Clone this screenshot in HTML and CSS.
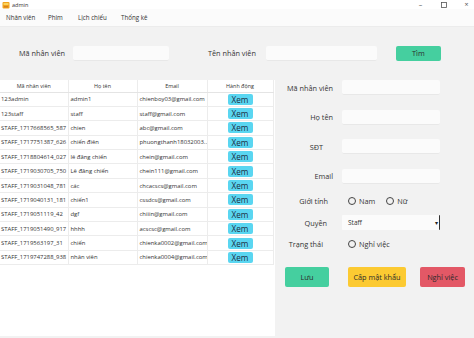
FILE: index.html
```html
<!DOCTYPE html>
<html lang="vi">
<head>
<meta charset="utf-8">
<title>admin</title>
<link rel="stylesheet" href="styles.css">
</head>
<body>
<div class="window">
  <div class="titlebar">
    <span class="app-icon">
      <svg width="8" height="8" viewBox="0 0 8 8"><rect x="0.5" y="1" width="7" height="6.5" rx="1" fill="#f0a21d"/><rect x="1.5" y="2" width="5" height="2" fill="#fbd35a"/><rect x="2" y="5" width="4" height="1.5" fill="#d9801a"/></svg>
    </span>
    <span class="title">admin</span>
    <span class="controls">
      <span class="ctl">&#8211;</span>
      <span class="ctl">
        <svg width="6" height="6" viewBox="0 0 6 6"><rect x="0.5" y="0.5" width="5" height="5" fill="none" stroke="#555" stroke-width="0.8"/></svg>
      </span>
      <span class="ctl">&#215;</span>
    </span>
  </div>
  <div class="menubar">
    <span class="menu-item">Nhân viên</span>
    <span class="menu-item">Phim</span>
    <span class="menu-item">Lịch chiếu</span>
    <span class="menu-item">Thống kê</span>
  </div>
  <div class="main">
    <div class="search">
      <span class="s-label s-label1">Mã nhân viên</span>
      <span class="input s-input1"></span>
      <span class="s-label s-label2">Tên nhân viên</span>
      <span class="input s-input2"></span>
      <span class="btn btn-green btn-tim">Tìm</span>
    </div>
    <div class="content">
      <div class="table-wrap">
        <table class="grid">
          <colgroup><col class="c1"><col class="c2"><col class="c3"><col class="c4"></colgroup>
          <thead>
            <tr><th>Mã nhân viên</th><th>Họ tên</th><th>Email</th><th>Hành động</th></tr>
          </thead>
          <tbody>
            <tr><td>123admin</td><td>admin1</td><td>chienboy03@gmail.com</td><td class="act"><span class="xem">Xem</span></td></tr>
            <tr><td>123staff</td><td>staff</td><td>staff@gmail.com</td><td class="act"><span class="xem">Xem</span></td></tr>
            <tr><td>STAFF_1717668565_587</td><td>chien</td><td>abc@gmail.com</td><td class="act"><span class="xem">Xem</span></td></tr>
            <tr><td>STAFF_1717751387_626</td><td>chiến điên</td><td>phuongthanh18032003...</td><td class="act"><span class="xem">Xem</span></td></tr>
            <tr><td>STAFF_1718804614_027</td><td>lê đăng chiến</td><td>chein@gmail.com</td><td class="act"><span class="xem">Xem</span></td></tr>
            <tr><td>STAFF_1719030705_750</td><td>Lê đăng chiến</td><td>chein111@gmail.com</td><td class="act"><span class="xem">Xem</span></td></tr>
            <tr><td>STAFF_1719031048_781</td><td>các</td><td>chcacscs@gmail.com</td><td class="act"><span class="xem">Xem</span></td></tr>
            <tr><td>STAFF_1719040131_181</td><td>chiến1</td><td>cssdcs@gmail.com</td><td class="act"><span class="xem">Xem</span></td></tr>
            <tr><td>STAFF_1719051119_42</td><td>dgf</td><td>chiiin@gmail.com</td><td class="act"><span class="xem">Xem</span></td></tr>
            <tr><td>STAFF_1719051490_917</td><td>hhhh</td><td>acscsc@gmail.com</td><td class="act"><span class="xem">Xem</span></td></tr>
            <tr><td>STAFF_1719563197_31</td><td>chiến</td><td>chienka0002@gmail.com</td><td class="act"><span class="xem">Xem</span></td></tr>
            <tr><td>STAFF_1719747288_938</td><td>nhân viên</td><td>chienka0004@gmail.com</td><td class="act"><span class="xem">Xem</span></td></tr>
          </tbody>
        </table>
      </div>
      <div class="form">
        <div class="frow r1"><span class="f-label pr2">Mã nhân viên</span><span class="input f-input"></span></div>
        <div class="frow r2"><span class="f-label pr2">Họ tên</span><span class="input f-input"></span></div>
        <div class="frow r3"><span class="f-label pr10">SĐT</span><span class="input f-input"></span></div>
        <div class="frow r4"><span class="f-label pr2">Email</span><span class="input f-input"></span></div>
        <div class="frow r5"><span class="f-label pr6">Giới tính</span>
          <span class="radios">
            <span class="radio"><span class="dot"></span>Nam</span>
            <span class="radio"><span class="dot"></span>Nữ</span>
          </span>
        </div>
        <div class="frow r6"><span class="f-label pr7">Quyền</span>
          <span class="select"><span class="sel-text">Staff</span><span class="sel-arrow">&#9662;</span></span>
        </div>
        <div class="frow r7"><span class="f-label pr11">Trạng thái</span>
          <span class="radios"><span class="radio"><span class="dot"></span>Nghỉ việc</span></span>
        </div>
        <div class="actions">
          <span class="btn btn-green btn-luu">Lưu</span>
          <span class="btn btn-yellow btn-cap">Cấp mật khẩu</span>
          <span class="btn btn-red btn-nghi">Nghỉ việc</span>
        </div>
      </div>
    </div>
  </div>
</div>
</body>
</html>
```

FILE: styles.css
```css
* { box-sizing: border-box; }
html, body { margin: 0; padding: 0; }
body {
  width: 474px;
  height: 338px;
  overflow: hidden;
  font-family: "Open Sans", "Noto Sans", sans-serif;
  color: #222;
  background: #ffffff;
}
.window { display: flex; flex-direction: column; height: 338px; }

.titlebar {
  height: 9px;
  display: flex;
  align-items: center;
  background: #ffffff;
  font-size: 5.5px;
  padding-left: 2px;
}
.app-icon { display: flex; width: 8px; height: 8px; }
.title { margin-left: 2px; color: #333; }
.controls { margin-left: auto; display: flex; align-items: center; margin-right: -4px; }
.ctl { width: 23px; text-align: center; font-size: 7px; color: #555; display: flex; justify-content: center; }

.menubar {
  height: 18px;
  display: flex;
  align-items: center;
  background: #fbfbfb;
  font-size: 6.2px;
  color: #333;
  padding-left: 6px;
  border-bottom: 1px solid #ececec;
}
.menu-item:nth-child(1) { width: 42px; }
.menu-item:nth-child(2) { width: 30px; }
.menu-item:nth-child(3) { width: 43px; }

.main { flex: 1; display: flex; flex-direction: column; background: #f2f2f2; }

.search {
  height: 51px;
  display: flex;
  align-items: center;
  padding-left: 19px;
  padding-top: 1px;
  font-size: 7.3px;
  color: #333;
}
.input {
  display: block;
  height: 15px;
  background: #fbfbfb;
  border-radius: 2px;
  border-bottom: 1px solid #e8e8e8;
}
.s-input1 { width: 96px; margin-left: 8px; }
.s-label2 { margin-left: 39px; }
.s-input2 { width: 111px; margin-left: 10px; }

.btn {
  display: flex;
  align-items: center;
  justify-content: center;
  border-radius: 2px;
  color: #2b2b2b;
  font-size: 7.3px;
}
.btn-green { background: #45cf9f; }
.btn-yellow { background: #fcca32; }
.btn-red { background: #e35866; }
.btn-tim { width: 45px; height: 15px; margin-left: 19px; }

.content { flex: 1; display: flex; padding-top: 2px; padding-bottom: 2px; }
.table-wrap { width: 275px; background: #ffffff; }
.grid {
  width: 273px;
  border-collapse: collapse;
  table-layout: fixed;
  font-size: 5.9px;
  color: #333;
}
.c1 { width: 68px; }
.c2 { width: 69px; }
.c3 { width: 70px; }
.c4 { width: 66px; }
.grid th {
  height: 12px;
  font-weight: normal;
  font-size: 5.4px;
  text-align: center;
  border-right: 1px solid #ececec;
  border-bottom: 1px solid #e4e4e4;
  padding: 0;
}
.grid td {
  height: 14.4px;
  padding: 0 0 0 2px;
  border-right: 1px solid #ececec;
  border-bottom: 1px solid #ececec;
  white-space: nowrap;
  overflow: hidden;
}
.grid td:first-child { padding-left: 1px; }
.grid td.act { text-align: center; padding: 0; }
.xem {
  display: inline-flex;
  align-items: center;
  justify-content: center;
  width: 25px;
  height: 11px;
  background: #5ad6f1;
  border-radius: 2px;
  font-size: 8.2px;
  color: #1d2f45;
  vertical-align: middle;
}

.form {
  flex: 1;
  display: flex;
  flex-direction: column;
  font-size: 7.3px;
  color: #333;
  padding-left: 2px;
}
.frow { display: flex; align-items: center; height: 15px; }
.r1 { margin-top: 0; }
.r2, .r3, .r4 { margin-top: 14.5px; }
.r5 { margin-top: 9.5px; }
.r6 { margin-top: 7px; }
.r7 { margin-top: 6.5px; }
.f-label { width: 58px; text-align: right; }
.pr2 { padding-right: 2px; }
.pr6 { padding-right: 7px; }
.pr7 { padding-right: 8px; }
.pr10 { padding-right: 12px; }
.pr11 { padding-right: 12px; }
.f-input { width: 98px; margin-left: 7px; }

.radios { display: flex; margin-left: 13px; }
.radio { display: flex; align-items: center; margin-right: 11px; }
.dot {
  width: 8px;
  height: 8px;
  border: 0.8px solid #444;
  border-radius: 50%;
  margin-right: 3px;
}

.select {
  width: 98px;
  height: 15px;
  margin-left: 7px;
  background: #fbfbfb;
  display: flex;
  align-items: center;
  border-right: 1px solid #333;
  border-radius: 1px;
}
.sel-text { margin-left: 6px; font-size: 6.5px; }
.sel-arrow { margin-left: auto; margin-right: 1px; font-size: 6px; color: #222; }

.actions { display: flex; margin-top: 15.5px; }
.btn-luu { width: 44px; height: 20px; margin-left: 8px; }
.btn-cap { width: 58px; height: 20px; margin-left: 19px; }
.btn-nghi { width: 45px; height: 20px; margin-left: 14px; }
```
